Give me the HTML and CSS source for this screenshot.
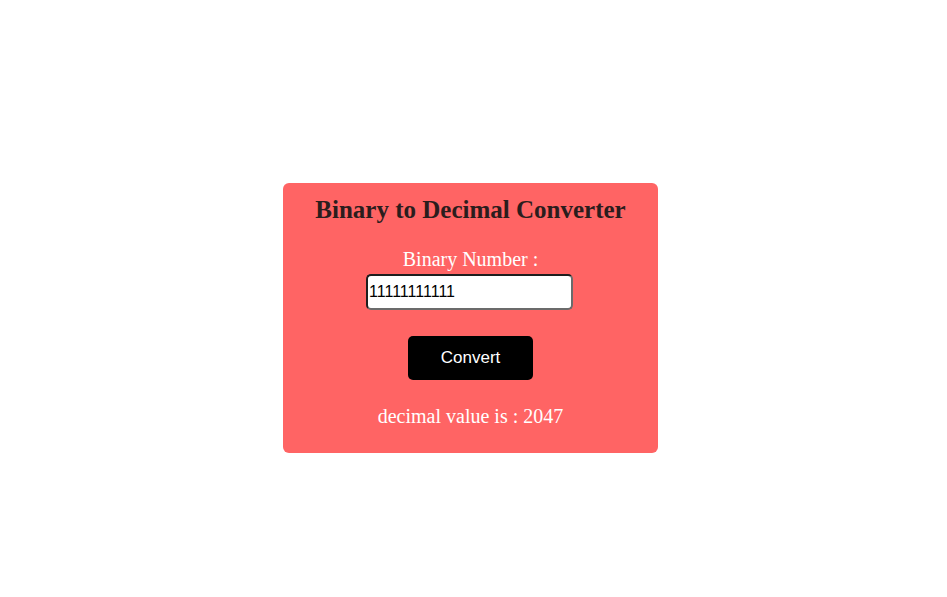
FILE: index.html
```html
<!DOCTYPE html>
<html>
<head>
<meta charset="utf-8">
<link rel="stylesheet" href="styles.css">
</head>
<body>
<div class="page">
  <div class="card">
    <h1 class="title">Binary to Decimal Converter</h1>
    <label class="label" for="bin">Binary Number :</label>
    <input class="input" id="bin" type="text" value="11111111111">
    <button class="btn">Convert</button>
    <p class="result">decimal value is : 2047</p>
  </div>
</div>
</body>
</html>
```
FILE: styles.css
```css
html, body {
  margin: 0;
  padding: 0;
  background: #ffffff;
}
.page {
  display: flex;
  justify-content: center;
  padding-top: 183px;
  padding-right: 6px;
}
.card {
  width: 375px;
  height: 270px;
  box-sizing: border-box;
  background: #ff6464;
  border-radius: 6px;
  display: flex;
  flex-direction: column;
  align-items: center;
  font-family: "Liberation Serif", "Times New Roman", serif;
}
.title {
  margin: 12px 0 0;
  font-size: 25px;
  font-weight: bold;
  color: #2b1d1d;
  line-height: 30px;
}
.label {
  margin-top: 22px;
  font-size: 20px;
  color: #ffffff;
  line-height: 24px;
}
.input {
  margin-top: 3px;
  margin-right: 2px;
  width: 207px;
  height: 36px;
  box-sizing: border-box;
  border-width: 2px;
  border-style: solid;
  border-color: #1e1e1e #6b6b6b #6b6b6b #1e1e1e;
  border-radius: 5px;
  padding: 0 1px;
  font-family: "Liberation Sans", Arial, sans-serif;
  font-size: 16px;
  color: #000;
  background: #fff;
  outline: none;
}
.btn {
  margin-top: 26px;
  width: 125px;
  height: 44px;
  background: #000;
  color: #fff;
  border: none;
  border-radius: 5px;
  font-family: "Liberation Sans", Arial, sans-serif;
  font-size: 17px;
}
.result {
  margin: 24px 0 0;
  font-size: 20px;
  color: #ffffff;
  line-height: 24px;
}
```
